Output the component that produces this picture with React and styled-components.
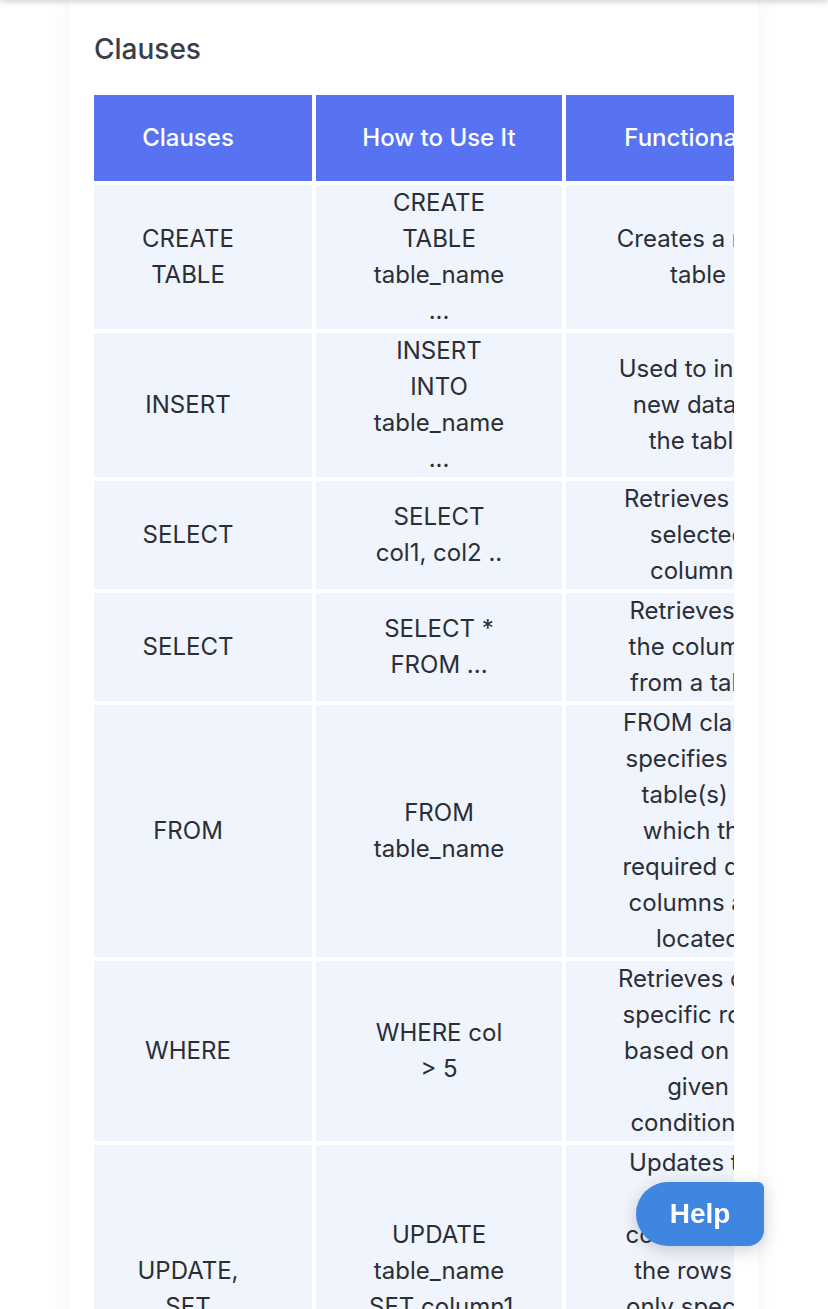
import React from "react";
import styled, { createGlobalStyle } from "styled-components";

const GlobalStyle = createGlobalStyle`
  html, body {
    margin: 0;
    padding: 0;
    background: #ffffff;
  }
  body {
    font-family: Inter, "Noto Sans", "Liberation Sans", sans-serif;
  }
`;

const HeaderShadow = styled.div`
  position: fixed;
  top: -10px;
  left: 0;
  right: 0;
  height: 10px;
  background: #ffffff;
  box-shadow: 0 1px 7px rgba(0, 0, 0, 0.22);
  z-index: 5;
`;

const Page = styled.main`
  padding: 0 70px;
`;

const Card = styled.section`
  background: #ffffff;
  padding: 32px 24px 40px;
  box-shadow: 0 0 22px rgba(80, 100, 190, 0.07);
`;

const Title = styled.h2`
  margin: 0 0 25px;
  font-size: 28px;
  line-height: 34px;
  font-weight: 500;
  color: #383e4b;
`;

const TableScroller = styled.div`
  overflow: hidden;
  margin-left: -4px;
  width: calc(100% + 4px);
`;

const Table = styled.table`
  table-layout: fixed;
  width: 744px;
  border-collapse: separate;
  border-spacing: 4px;
`;

const HeadCell = styled.th`
  box-sizing: border-box;
  width: ${(p) => p.$w}px;
  padding: 25px ${(p) => p.$pr}px 25px ${(p) => p.$pl}px;
  background: #5773f2;
  color: #ffffff;
  font-size: 24px;
  line-height: 36px;
  font-weight: 500;
  text-align: center;
  white-space: nowrap;
`;

const Cell = styled.td`
  box-sizing: border-box;
  padding: 0 ${(p) => p.$pr}px 0 ${(p) => p.$pl}px;
  background: #f0f4fc;
  color: #2b2e36;
  font-size: 24px;
  line-height: 36px;
  font-weight: 400;
  text-align: center;
  vertical-align: middle;
`;

const HelpButton = styled.button`
  position: fixed;
  right: 64px;
  bottom: 63px;
  width: 128px;
  height: 64px;
  padding: 0;
  border: none;
  border-radius: 32px 6px 16px 32px;
  background: #3e86df;
  color: #ffffff;
  font-family: "Liberation Sans", Arial, sans-serif;
  font-weight: 700;
  font-size: 28px;
  line-height: 64px;
  box-shadow: 0 4px 16px rgba(30, 40, 60, 0.22);
  cursor: pointer;
  z-index: 10;
`;

const columns = [
  { title: "Clauses", w: 218, pl: 24, pr: 54, hpl: 24, hpr: 54 },
  { title: "How to Use It", w: 246, pl: 53, pr: 53, hpl: 16, hpr: 16 },
  { title: "Functionality", w: 264, pl: 47, pr: 47, hpl: 16, hpr: 16 },
];

const rows = [
  ["CREATE TABLE", "CREATE TABLE table_name ...", "Creates a new table"],
  ["INSERT", "INSERT INTO table_name ...", "Used to insert new data in the table"],
  ["SELECT", "SELECT col1, col2 ..", "Retrieves the selected columns"],
  ["SELECT", "SELECT * FROM ...", "Retrieves all the columns from a table"],
  [
    "FROM",
    "FROM table_name",
    "FROM clause specifies the table(s) in which the required data columns are located",
  ],
  ["WHERE", "WHERE col > 5", "Retrieves only specific rows based on the given condition(s)"],
  [
    "UPDATE, SET",
    "UPDATE table_name SET\u00a0column1 ...",
    "Updates the values of columns and the rows of only specific records which satisfy the condition",
  ],
  ["DELETE", "DELETE FROM table_name ...", "Deletes the rows which satisfy the condition"],
];

export default function App() {
  return (
    <>
      <GlobalStyle />
      <HeaderShadow />
      <Page>
        <Card>
          <Title>Clauses</Title>
          <TableScroller>
            <Table>
              <thead>
                <tr>
                  {columns.map((c) => (
                    <HeadCell key={c.title} $w={c.w} $pl={c.hpl} $pr={c.hpr}>
                      {c.title}
                    </HeadCell>
                  ))}
                </tr>
              </thead>
              <tbody>
                {rows.map((r, i) => (
                  <tr key={i}>
                    {r.map((text, j) => (
                      <Cell key={j} $pl={columns[j].pl} $pr={columns[j].pr}>
                        {text}
                      </Cell>
                    ))}
                  </tr>
                ))}
              </tbody>
            </Table>
          </TableScroller>
        </Card>
      </Page>
      <HelpButton type="button">Help</HelpButton>
    </>
  );
}
